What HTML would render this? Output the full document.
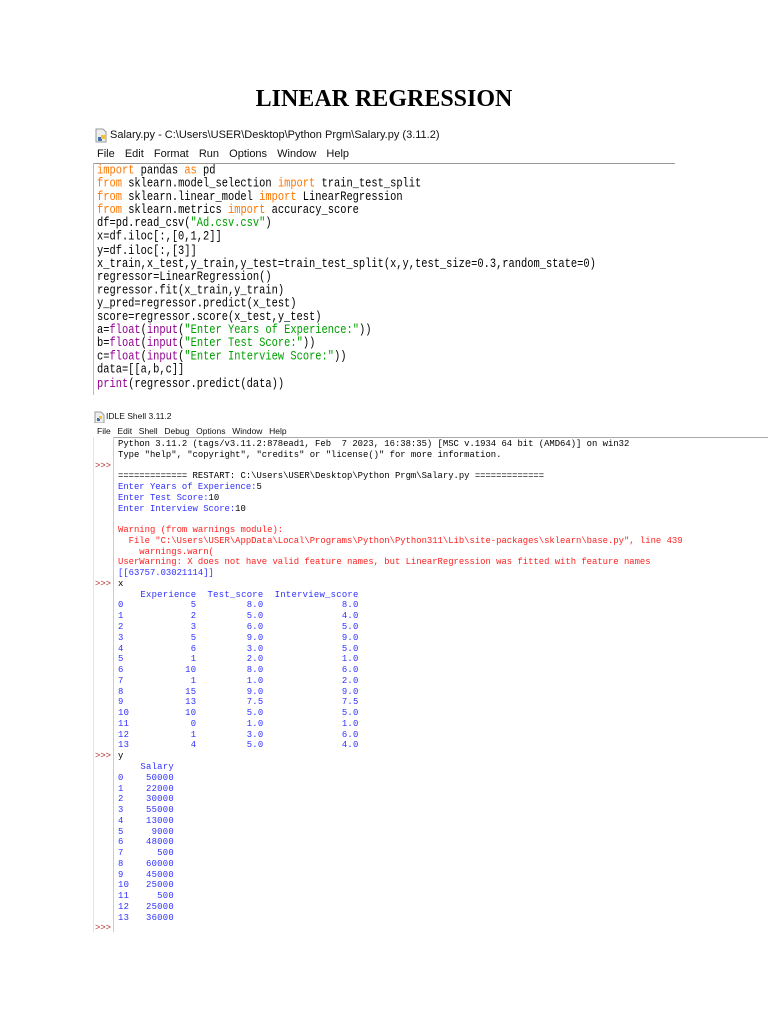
<!DOCTYPE html>
<html><head><meta charset="utf-8"><style>
*{margin:0;padding:0}
body{width:768px;height:1024px;background:#fff;position:relative;overflow:hidden}
.t{position:absolute;white-space:pre}
h1{position:absolute;left:0;width:768px;top:86px;text-align:center;font:bold 24px "Liberation Serif",serif;color:#000}
.ui{font-family:"Liberation Sans",sans-serif;color:#111}
.code{font-family:"Liberation Mono",monospace;font-size:10.4px;line-height:11.1px;color:#000;transform:scaleY(1.2);transform-origin:0 0}
.sh{font-family:"Liberation Mono",monospace;font-size:8.9px;line-height:10.77px;color:#000}
.k{color:#ff7700}.s{color:#00a000}.b{color:#900090}.o{color:#3030ff}.e{color:#ff2020}.p{color:#b03030}
.w{letter-spacing:.27px}
</style></head><body>
<h1>LINEAR REGRESSION</h1>

<svg style="position:absolute;left:94px;top:128px" width="14" height="15"><path d="M2 1h7l3 3v10H2z" fill="#eee" stroke="#999"/><path d="M4 9h4v4H4z" fill="#3a6fb0"/><path d="M7 7h4v4H7z" fill="#f2c230"/></svg>
<div class="t ui" style="left:110px;top:129px;font-size:11px">Salary.py - C:\Users\USER\Desktop\Python Prgm\Salary.py (3.11.2)</div>
<div class="t ui" style="left:97px;top:148px;font-size:11px;word-spacing:2px">File  Edit  Format  Run  Options  Window  Help</div>
<div style="position:absolute;left:93px;top:163px;width:582px;height:1px;background:#999"></div>
<div style="position:absolute;left:93px;top:163px;width:1px;height:232px;background:#bbb"></div>
<div class="t code" style="left:97px;top:165px"><span class="k">import</span> pandas <span class="k">as</span> pd
<span class="k">from</span> sklearn.model_selection <span class="k">import</span> train_test_split
<span class="k">from</span> sklearn.linear_model <span class="k">import</span> LinearRegression
<span class="k">from</span> sklearn.metrics <span class="k">import</span> accuracy_score
df=pd.read_csv(<span class="s">"Ad.csv.csv"</span>)
x=df.iloc[:,[0,1,2]]
y=df.iloc[:,[3]]
x_train,x_test,y_train,y_test=train_test_split(x,y,test_size=0.3,random_state=0)
regressor=LinearRegression()
regressor.fit(x_train,y_train)
y_pred=regressor.predict(x_test)
score=regressor.score(x_test,y_test)
a=<span class="b">float</span>(<span class="b">input</span>(<span class="s">"Enter Years of Experience:"</span>))
b=<span class="b">float</span>(<span class="b">input</span>(<span class="s">"Enter Test Score:"</span>))
c=<span class="b">float</span>(<span class="b">input</span>(<span class="s">"Enter Interview Score:"</span>))
data=[[a,b,c]]
<span class="b">print</span>(regressor.predict(data))</div>

<svg style="position:absolute;left:94px;top:411px" width="11" height="12"><path d="M1 1h6l3 3v8H1z" fill="#eee" stroke="#999"/><path d="M3 7h3v3H3z" fill="#3a6fb0"/><path d="M5 5h3v3H5z" fill="#f2c230"/></svg>
<div class="t ui" style="left:106px;top:411px;font-size:8.5px">IDLE Shell 3.11.2</div>
<div class="t ui" style="left:97px;top:426px;font-size:8.5px;word-spacing:1px">File  Edit  Shell  Debug  Options  Window  Help</div>
<div style="position:absolute;left:113px;top:437px;width:655px;height:1px;background:#aaa"></div>
<div style="position:absolute;left:113px;top:437px;width:1px;height:495px;background:#ccc"></div>
<div style="position:absolute;left:93px;top:437px;width:1px;height:495px;background:#e4e4e4"></div>
<div class="t sh p" style="left:95px;top:439px">

&gt;&gt;&gt;










&gt;&gt;&gt;















&gt;&gt;&gt;















&gt;&gt;&gt;</div>
<div class="t sh" style="left:118px;top:439px">Python 3.11.2 (tags/v3.11.2:878ead1, Feb  7 2023, 16:38:35) [MSC v.1934 64 bit (AMD64)] on win32
Type "help", "copyright", "credits" or "license()" for more information.

============= RESTART: C:\Users\USER\Desktop\Python Prgm\Salary.py =============
<span class="o">Enter Years of Experience:</span>5
<span class="o">Enter Test Score:</span>10
<span class="o">Enter Interview Score:</span>10

<span class="e">Warning (from warnings module):
  File "C:\Users\USER\AppData\Local\Programs\Python\Python311\Lib\site-packages\sklearn\base.py", line 439
    warnings.warn(
UserWarning: X does not have valid feature names, but LinearRegression was fitted with feature names</span>
<span class="o">[[63757.03021114]]</span>
x
<span class="o w">    Experience  Test_score  Interview_score
0            5         8.0              8.0
1            2         5.0              4.0
2            3         6.0              5.0
3            5         9.0              9.0
4            6         3.0              5.0
5            1         2.0              1.0
6           10         8.0              6.0
7            1         1.0              2.0
8           15         9.0              9.0
9           13         7.5              7.5
10          10         5.0              5.0
11           0         1.0              1.0
12           1         3.0              6.0
13           4         5.0              4.0</span>
y
<span class="o w">    Salary
0    50000
1    22000
2    30000
3    55000
4    13000
5     9000
6    48000
7      500
8    60000
9    45000
10   25000
11     500
12   25000
13   36000</span>
</div>
</body></html>
